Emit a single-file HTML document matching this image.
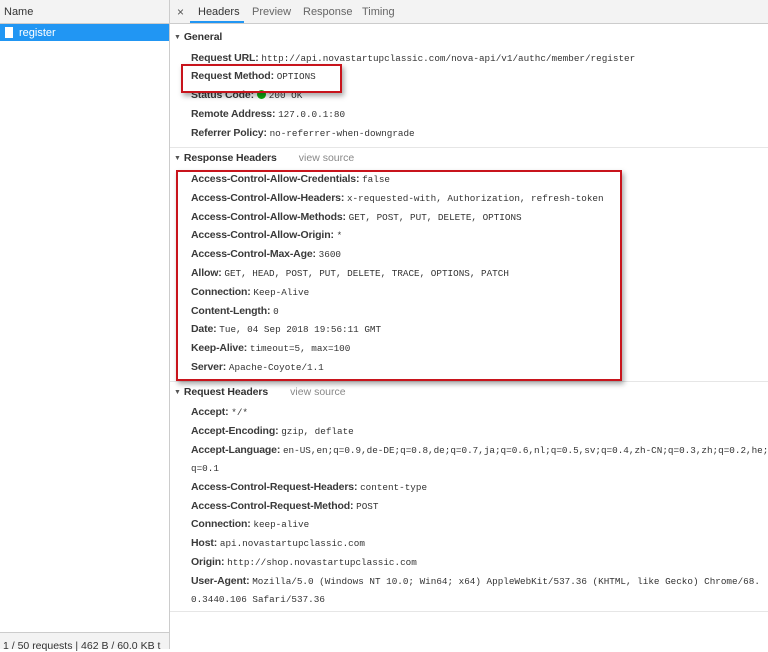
<!DOCTYPE html>
<html><head><style>
*{margin:0;padding:0;box-sizing:border-box}
body{width:768px;height:649px;overflow:hidden;background:#fff;font-family:"Liberation Sans",sans-serif;font-size:11px;color:#333;position:relative}
.a{position:absolute;white-space:nowrap}
.k{font-weight:bold;color:#3a3a3a;font-size:10.5px;letter-spacing:-0.15px}
.v{font-family:"Liberation Mono",monospace;font-size:9.3px;color:#333;font-weight:normal;letter-spacing:0}
.sec{font-weight:bold;color:#333;font-size:10.5px;letter-spacing:-0.1px}
.vs{color:#888;font-weight:normal;font-size:10.5px;letter-spacing:0}
.tri{font-size:7px;color:#555;margin-right:3px;position:relative;top:-1px}
.hr{position:absolute;left:170px;right:0;height:1px;background:#e6e6e6}
.red{position:absolute;border:2px solid #c8141c;box-shadow:2px 3px 5px rgba(0,0,0,.35)}
</style></head><body>
<div class="a" style="left:0;top:0;width:169px;height:24px;background:#f3f3f3;border-bottom:1px solid #ccc"></div>
<div class="a" style="left:4px;top:6px;color:#333">Name</div>
<div class="a" style="left:169px;top:0;width:1px;height:649px;background:#ccc"></div>
<div class="a" style="left:170px;top:0;width:598px;height:24px;background:#f3f3f3;border-bottom:1px solid #ccc"></div>
<div class="a" style="left:177px;top:5px;font-size:12px;color:#555">×</div>
<div class="a" style="left:198px;top:6px;color:#333">Headers</div>
<div class="a" style="left:190px;top:21px;width:54px;height:2px;background:#2196f3"></div>
<div class="a" style="left:252px;top:6px;color:#666">Preview</div>
<div class="a" style="left:303px;top:6px;color:#666">Response</div>
<div class="a" style="left:362px;top:6px;color:#666">Timing</div>
<div class="a" style="left:0;top:24px;width:169px;height:17px;background:#2196f3"></div>
<div class="a" style="left:5px;top:27px;width:8px;height:11px;background:#fff"></div>
<div class="a" style="left:19px;top:27px;color:#fff">register</div>
<div class="a" style="left:0;top:632px;width:169px;height:17px;background:#f3f3f3;border-top:1px solid #ccc"></div>
<div class="a" style="left:3px;top:640px;color:#333;font-size:10.5px">1 / 50 requests | 462 B / 60.0 KB t</div>

<div class="a sec" style="left:174px;top:31px"><span class="tri">▼</span>General</div>
<div class="a" style="left:191px;top:52px"><span class="k">Request URL: </span><span class="v">http://api.novastartupclassic.com/nova-api/v1/authc/member/register</span></div>
<div class="a" style="left:191px;top:70px"><span class="k">Request Method: </span><span class="v">OPTIONS</span></div>
<div class="a" style="left:191px;top:89px"><span class="k">Status Code: </span><span style="display:inline-block;width:9px;height:9px;border-radius:50%;background:#1a1;vertical-align:-1px"></span> <span class="v">200 OK</span></div>
<div class="a" style="left:191px;top:108px"><span class="k">Remote Address: </span><span class="v">127.0.0.1:80</span></div>
<div class="a" style="left:191px;top:127px"><span class="k">Referrer Policy: </span><span class="v">no-referrer-when-downgrade</span></div>
<div class="hr" style="top:147px"></div>

<div class="a sec" style="left:174px;top:152px"><span class="tri">▼</span>Response Headers<span class="vs" style="margin-left:22px">view source</span></div>
<div class="a" style="left:191px;top:173px"><span class="k">Access-Control-Allow-Credentials: </span><span class="v">false</span></div>
<div class="a" style="left:191px;top:192px"><span class="k">Access-Control-Allow-Headers: </span><span class="v">x-requested-with, Authorization, refresh-token</span></div>
<div class="a" style="left:191px;top:211px"><span class="k">Access-Control-Allow-Methods: </span><span class="v">GET, POST, PUT, DELETE, OPTIONS</span></div>
<div class="a" style="left:191px;top:229px"><span class="k">Access-Control-Allow-Origin: </span><span class="v">*</span></div>
<div class="a" style="left:191px;top:248px"><span class="k">Access-Control-Max-Age: </span><span class="v">3600</span></div>
<div class="a" style="left:191px;top:267px"><span class="k">Allow: </span><span class="v">GET, HEAD, POST, PUT, DELETE, TRACE, OPTIONS, PATCH</span></div>
<div class="a" style="left:191px;top:286px"><span class="k">Connection: </span><span class="v">Keep-Alive</span></div>
<div class="a" style="left:191px;top:305px"><span class="k">Content-Length: </span><span class="v">0</span></div>
<div class="a" style="left:191px;top:323px"><span class="k">Date: </span><span class="v">Tue, 04 Sep 2018 19:56:11 GMT</span></div>
<div class="a" style="left:191px;top:342px"><span class="k">Keep-Alive: </span><span class="v">timeout=5, max=100</span></div>
<div class="a" style="left:191px;top:361px"><span class="k">Server: </span><span class="v">Apache-Coyote/1.1</span></div>
<div class="hr" style="top:381px"></div>

<div class="a sec" style="left:174px;top:386px"><span class="tri">▼</span>Request Headers<span class="vs" style="margin-left:22px">view source</span></div>
<div class="a" style="left:191px;top:406px"><span class="k">Accept: </span><span class="v">*/*</span></div>
<div class="a" style="left:191px;top:425px"><span class="k">Accept-Encoding: </span><span class="v">gzip, deflate</span></div>
<div class="a" style="left:191px;top:444px"><span class="k">Accept-Language: </span><span class="v">en-US,en;q=0.9,de-DE;q=0.8,de;q=0.7,ja;q=0.6,nl;q=0.5,sv;q=0.4,zh-CN;q=0.3,zh;q=0.2,he;q</span></div>
<div class="a" style="left:191px;top:462px"><span class="v">q=0.1</span></div>
<div class="a" style="left:191px;top:481px"><span class="k">Access-Control-Request-Headers: </span><span class="v">content-type</span></div>
<div class="a" style="left:191px;top:500px"><span class="k">Access-Control-Request-Method: </span><span class="v">POST</span></div>
<div class="a" style="left:191px;top:518px"><span class="k">Connection: </span><span class="v">keep-alive</span></div>
<div class="a" style="left:191px;top:537px"><span class="k">Host: </span><span class="v">api.novastartupclassic.com</span></div>
<div class="a" style="left:191px;top:556px"><span class="k">Origin: </span><span class="v">http://shop.novastartupclassic.com</span></div>
<div class="a" style="left:191px;top:575px"><span class="k">User-Agent: </span><span class="v">Mozilla/5.0 (Windows NT 10.0; Win64; x64) AppleWebKit/537.36 (KHTML, like Gecko) Chrome/68.</span></div>
<div class="a" style="left:191px;top:593px"><span class="v">0.3440.106 Safari/537.36</span></div>
<div class="hr" style="top:611px"></div>

<div class="red" style="left:181px;top:64px;width:161px;height:29px"></div>
<div class="red" style="left:176px;top:170px;width:446px;height:211px"></div>
</body></html>
